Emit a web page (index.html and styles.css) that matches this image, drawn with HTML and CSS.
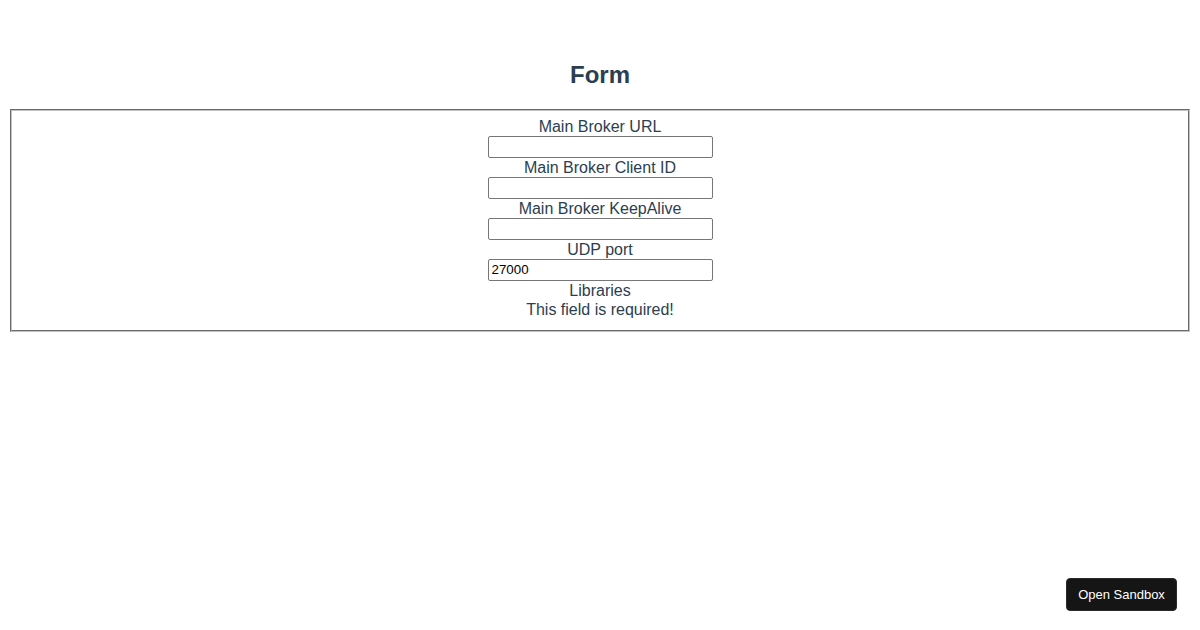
FILE: index.html
```html
<!DOCTYPE html>
<html>
<head>
<meta charset="utf-8">
<link rel="stylesheet" href="styles.css">
</head>
<body>
<div class="app">
  <h2 class="title">Form</h2>
  <fieldset class="form">
    <div class="field">
      <label class="field-label">Main Broker URL</label>
      <input class="field-input" type="text">
    </div>
    <div class="field">
      <label class="field-label">Main Broker Client ID</label>
      <input class="field-input" type="text">
    </div>
    <div class="field">
      <label class="field-label">Main Broker KeepAlive</label>
      <input class="field-input" type="text">
    </div>
    <div class="field">
      <label class="field-label">UDP port</label>
      <input class="field-input" type="text" value="27000">
    </div>
    <div class="field">
      <label class="field-label">Libraries</label>
      <div class="error">This field is required!</div>
    </div>
  </fieldset>
</div>
<a class="sandbox-btn">Open Sandbox</a>
</body>
</html>
```

FILE: styles.css
```css
body {
  margin: 8px;
  background: #fff;
}
.app {
  font-family: "Liberation Sans", Arial, Helvetica, sans-serif;
  color: #2c3e50;
  text-align: center;
  margin-top: 53px;
  -webkit-font-smoothing: antialiased;
}
.title {
  font-size: 24px;
  font-weight: bold;
  margin: 19.92px 0;
}
.form {
  margin: 0 2px;
  padding: 6px 12px 11px;
  border: 2px groove #c0c0c0;
}
.field {
  display: flex;
  flex-direction: column;
  align-items: center;
}
.field-label {
  font-size: 16px;
  line-height: 19px;
}
.field-input {
  box-sizing: border-box;
  width: 225px;
  height: 22px;
  margin: 0;
  padding: 1px 3px;
  border: 1px solid #767676;
  border-radius: 2px;
  font-family: "Liberation Sans", Arial, sans-serif;
  font-size: 13.33px;
  color: #000;
}
.error {
  font-size: 16px;
  line-height: 19px;
}
.sandbox-btn {
  position: fixed;
  right: 23px;
  bottom: 19px;
  width: 111px;
  height: 33px;
  box-sizing: border-box;
  display: flex;
  align-items: center;
  justify-content: center;
  background: #151515;
  color: #fff;
  border-radius: 4px;
  font-family: "Liberation Sans", Arial, sans-serif;
  font-size: 13px;
  border: 1px solid #2a2a2a;
}
```
